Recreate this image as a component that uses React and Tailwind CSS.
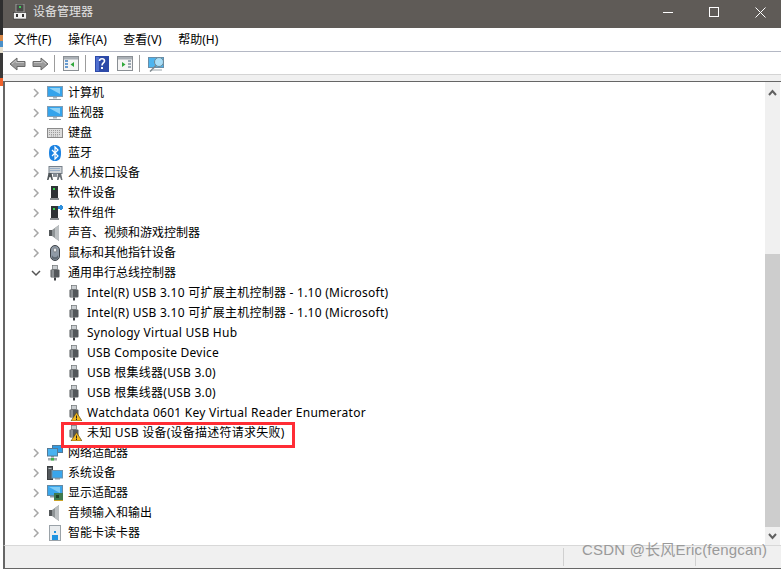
import React from 'react'

const fontStack = 'font-["Noto_Sans","Noto_Sans_CJK_SC",sans-serif]'

const Chevron = ({ open }) => (
  <svg width="10" height="10" viewBox="0 0 10 10" fill="none" stroke={open ? '#555' : '#a6a6a6'} strokeWidth="1.5">
    {open ? <path d="M1 3l4 4 4-4" /> : <path d="M3 1l4 4-4 4" />}
  </svg>
)

const Monitor = () => (
  <svg width="16" height="16" viewBox="0 0 16 16">
    <rect x="0.5" y="1.5" width="15" height="10" fill="#35a4ec" stroke="#7f9db5" />
    <path d="M2 3h11v6z" fill="#8fd3f8" />
    <path d="M6 12h4v1.5H6z" fill="#a8b4bc" />
    <path d="M2 14h12v1H2z" fill="#8d98a0" />
  </svg>
)

const Keyboard = () => (
  <svg width="16" height="16" viewBox="0 0 16 16">
    <rect x="0.5" y="3.5" width="15" height="9" fill="#dcdcdc" stroke="#8a8a8a" />
    <path d="M2 5.500h12M2 7.500h12M2 9.500h12M4 11h8" stroke="#9c9c9c" strokeDasharray="1 1" />
  </svg>
)

const Bluetooth = () => (
  <svg width="16" height="16" viewBox="0 0 16 16">
    <path d="M8 0c4 0 6 2 6 8s-2 8-6 8-6-2-6-8 2-8 6-8z" fill="#1a82e2" />
    <path d="M5 5l6 6-3 3V2l3 3-6 6" fill="none" stroke="#fff" strokeWidth="1.2" />
  </svg>
)

const Hid = () => (
  <svg width="16" height="16" viewBox="0 0 16 16">
    <rect x="2" y="1.5" width="13" height="7" fill="#cfd4d8" stroke="#77808a" />
    <path d="M3.5 3.5h10M3.5 5.5h10" stroke="#5f87b5" strokeDasharray="1 1" />
    <path d="M0 15l1.5-7h3L6 15H4.5L3.5 12H2.500L1.500 15z" fill="#4f5559" />
    <path d="M10 15l1-7h3l1.500 7H14l-1-3h-.5l-1 3z" fill="#6a7076" />
    <rect x="6" y="9" width="4" height="3" fill="#8a9097" />
  </svg>
)

const Tower = ({ plus }) => (
  <svg width="16" height="16" viewBox="0 0 16 16">
    <rect x="4" y="1" width="7" height="12" fill="#2f3336" />
    <rect x="6" y="3" width="2" height="2" fill="#35d04a" />
    <rect x="3" y="13" width="9" height="2" fill="#8b8f92" />
    {plus && <path d="M11 1h2V0h2v1h1v3h-1v1h-2V4h-2z" fill="#2e8fdc" />}
  </svg>
)

const Speaker = () => (
  <svg width="16" height="16" viewBox="0 0 16 16">
    <path d="M2 5h3L12 0v16L5 11H2z" fill="#8f9496" />
    <path d="M2 5h3v6H2z" fill="#54585a" />
    <path d="M8 3l4-3v16l-4-3z" fill="#bcc0c2" />
  </svg>
)

const Mouse = () => (
  <svg width="16" height="16" viewBox="0 0 16 16">
    <rect x="3.500" y="0.500" width="9" height="15" rx="4.500" fill="#8f9aa6" stroke="#3d4247" />
    <rect x="6.500" y="3" width="3" height="4" rx="1.500" fill="#e4e8ec" stroke="#555" strokeWidth="0.5" />
    <path d="M5 10c1 3 5 3 6 0v3c-1 2-5 2-6 0z" fill="#5f6972" />
  </svg>
)

const UsbPlug = ({ warn }) => (
  <svg width="16" height="16" viewBox="0 0 16 16">
    <rect x="5.500" y="0.500" width="5" height="4" fill="#c9cdd0" stroke="#6b6f72" strokeWidth="0.7" />
    <rect x="3.500" y="4.500" width="9" height="8" rx="1" fill="#54585b" />
    <path d="M4.500 5h2.500v7H4.500z" fill="#8b8f92" />
    <rect x="7" y="12.500" width="2" height="3" fill="#3c3f42" />
    {warn && (
      <>
        <path d="M10.500 7.500L16 16H5z" fill="#f2b91f" stroke="#5b4a16" strokeWidth="0.7" />
        <path d="M10.500 10.500v3M10.500 14v1" stroke="#222" strokeWidth="1" />
      </>
    )}
  </svg>
)

const Network = () => (
  <svg width="16" height="16" viewBox="0 0 16 16">
    <rect x="5.500" y="0.500" width="10" height="7" fill="#2f9be4" stroke="#547a96" />
    <rect x="0.500" y="3.500" width="10" height="7.500" fill="#49b2f0" stroke="#547a96" />
    <path d="M4 11h3v1.500H4z" fill="#7a8a94" />
    <path d="M1 13h9v2.500H1z" fill="#a7adb0" />
    <path d="M4 13h3v2.500H4z" fill="#3fb54a" />
  </svg>
)

const SystemDev = () => (
  <svg width="16" height="16" viewBox="0 0 16 16">
    <rect x="0.500" y="1.500" width="5" height="13" fill="#53585c" stroke="#3c3f42" />
    <rect x="1.500" y="3" width="3" height="1" fill="#b9bec2" />
    <rect x="5" y="5.500" width="10.500" height="7.500" fill="#3aa6ec" stroke="#6e93ad" />
    <path d="M8 13h5v1.500H8z" fill="#8f9aa2" />
  </svg>
)

const Display = () => (
  <svg width="16" height="16" viewBox="0 0 16 16">
    <rect x="0.500" y="0.500" width="15" height="10" fill="#3aa6ec" stroke="#668aa3" />
    <path d="M2 2h11v6z" fill="#7fcdf7" />
    <rect x="3" y="11" width="5" height="1.500" fill="#8f9aa2" />
    <rect x="7" y="8" width="9" height="7" fill="#3f7a4f" />
    <path d="M7 15.500h9" stroke="#c9a227" />
    <rect x="9" y="10" width="3" height="3" fill="#1f3f28" />
  </svg>
)

const CardReader = () => (
  <svg width="16" height="16" viewBox="0 0 16 16">
    <rect x="2.500" y="0.500" width="11" height="15" fill="#e9ecee" stroke="#9aa2a8" />
    <rect x="7" y="6" width="2" height="2" fill="#1f93e0" />
    <rect x="5" y="10" width="6" height="5" fill="#1f93e0" />
  </svg>
)

const rows = [
  { label: '计算机', icon: <Monitor /> },
  { label: '监视器', icon: <Monitor /> },
  { label: '键盘', icon: <Keyboard /> },
  { label: '蓝牙', icon: <Bluetooth /> },
  { label: '人机接口设备', icon: <Hid /> },
  { label: '软件设备', icon: <Tower /> },
  { label: '软件组件', icon: <Tower plus /> },
  { label: '声音、视频和游戏控制器', icon: <Speaker /> },
  { label: '鼠标和其他指针设备', icon: <Mouse /> },
  { label: '通用串行总线控制器', icon: <UsbPlug />, open: true },
  { label: 'Intel(R) USB 3.10 可扩展主机控制器 - 1.10 (Microsoft)', icon: <UsbPlug />, child: true },
  { label: 'Intel(R) USB 3.10 可扩展主机控制器 - 1.10 (Microsoft)', icon: <UsbPlug />, child: true },
  { label: 'Synology Virtual USB Hub', icon: <UsbPlug />, child: true },
  { label: 'USB Composite Device', icon: <UsbPlug />, child: true },
  { label: 'USB 根集线器(USB 3.0)', icon: <UsbPlug />, child: true },
  { label: 'USB 根集线器(USB 3.0)', icon: <UsbPlug />, child: true },
  { label: 'Watchdata 0601 Key Virtual Reader Enumerator', icon: <UsbPlug warn />, child: true },
  { label: '未知 USB 设备(设备描述符请求失败)', icon: <UsbPlug warn />, child: true },
  { label: '网络适配器', icon: <Network /> },
  { label: '系统设备', icon: <SystemDev /> },
  { label: '显示适配器', icon: <Display /> },
  { label: '音频输入和输出', icon: <Speaker /> },
  { label: '智能卡读卡器', icon: <CardReader /> },
]

const TreeRow = ({ row }) => (
  <div className={`flex h-5 items-center ${row.child ? 'pl-[61px]' : 'pl-[23px]'}`}>
    {!row.child && (
      <span className="flex w-[16px] shrink-0 justify-center">
        <Chevron open={row.open} />
      </span>
    )}
    <span className={`flex w-[16px] shrink-0 justify-center ${row.child ? '' : 'ml-[3px]'}`}>{row.icon}</span>
    <span className={`whitespace-nowrap text-[12px] leading-5 text-black ${row.child ? 'ml-[5px] tracking-[0.25px]' : 'ml-[5px]'}`}>
      {row.label}
    </span>
  </div>
)

const Arrow = ({ flip }) => (
  <svg width="17" height="16" viewBox="0 0 17 16" className={flip ? '-scale-x-100' : ''}>
    <path d="M1 8l7-6v3.500h8v5H8V14z" fill="#9a9a9a" stroke="#6a6a6a" />
    <path d="M3 8l4-3.500v2h8" fill="none" stroke="#c4c4c4" />
  </svg>
)

const PanelIcon = ({ right }) => (
  <svg width="16" height="15" viewBox="0 0 16 15">
    <rect x="0.500" y="0.500" width="15" height="14" fill="#f4f4f4" stroke="#8a8f94" />
    <rect x="1" y="1" width="14" height="2.500" fill="#aab0b6" />
    {right ? (
      <>
        <path d="M5 6l3.500 2.500L5 11z" fill="#2fa83a" />
        <path d="M11 5h3M11 8h3M11 11h3" stroke="#7d8d9c" strokeWidth="1.500" />
      </>
    ) : (
      <>
        <path d="M2 5h3M2 8h3M2 11h3" stroke="#3a7fc4" strokeWidth="1.500" />
        <path d="M11 6L7.500 8.500 11 11z" fill="#2fa83a" />
      </>
    )}
  </svg>
)

const HelpIcon = () => (
  <svg width="14" height="16" viewBox="0 0 14 16">
    <rect width="14" height="16" fill="#2d4aa8" />
    <rect x="1" y="1" width="3" height="14" fill="#4f6fd0" />
    <path d="M4.500 5c0-3 5-3 5 0 0 2-2.500 2-2.500 4.500" fill="none" stroke="#fff" strokeWidth="1.600" />
    <rect x="6" y="11" width="2" height="2" fill="#fff" />
  </svg>
)

const ScanIcon = () => (
  <svg width="17" height="16" viewBox="0 0 17 16">
    <rect x="0.500" y="1.500" width="15" height="10" fill="#4db4ee" stroke="#6a8ea8" />
    <circle cx="11" cy="6" r="4.500" fill="#a8def8" stroke="#6d8795" />
    <path d="M8 9.500L2 15.500" stroke="#7b868c" strokeWidth="1.500" />
    <path d="M4 14h10" stroke="#9aa4aa" />
  </svg>
)

const Sep = () => <span className="h-[17px] w-px bg-[#9c9c9c]" />

export default function App() {
  return (
    <div className={`flex h-[570px] w-[781px] overflow-hidden bg-white ${fontStack}`}>
      {/* desktop sliver behind the window */}
      <div className="flex w-[3px] shrink-0 flex-col">
        <span className="h-[35px] bg-[#2e2e2e]" />
        <span className="h-[6px] bg-[#d98a4a]" />
        <span className="h-[6px] bg-[#4a90c8]" />
        <span className="h-[6px] bg-[#e6e0d0]" />
        <span className="h-[25px] bg-[#3a3a3a]" />
        <span className="h-[8px] bg-[#f0622c]" />
      </div>
      <div className="relative flex min-w-0 flex-1 flex-col">
        {/* title bar */}
        <div className="flex h-[28px] shrink-0 items-center bg-[#5f5b57] pb-1 pl-[10px]">
          <svg width="14" height="16" viewBox="0 0 14 16">
            <rect x="3" y="0" width="8" height="8" fill="#4a4a48" stroke="#ddd" strokeWidth="0.5" />
            <rect x="6" y="2" width="2" height="2" fill="#3fd05a" />
            <rect x="0.500" y="8.500" width="13" height="6.500" fill="#f0f0f0" stroke="#333" strokeWidth="0.6" />
            <rect x="3" y="10" width="2" height="3" fill="#333" />
            <rect x="9" y="10" width="2" height="3" fill="#333" />
          </svg>
          <span className="ml-[6px] text-[12px] text-[#e2e2e2]">设备管理器</span>
          <div className="ml-auto -mr-[2px] flex items-center">
            <span className="flex w-[46px] justify-center">
              <span className="h-px w-[10px] bg-white" />
            </span>
            <span className="flex w-[46px] justify-center">
              <span className="h-[10px] w-[10px] border border-white" />
            </span>
            <span className="flex w-[46px] justify-center">
              <svg width="11" height="11" viewBox="0 0 11 11" stroke="#fff" fill="none">
                <path d="M0.500 0.500l10 10M10.500 0.500l-10 10" />
              </svg>
            </span>
          </div>
        </div>

        {/* menu bar */}
        <div className="flex h-[24px] shrink-0 items-center gap-[16.5px] border-b border-[#b4b8c4] pl-[11px] text-[12px] text-black">
          <span>文件(F)</span>
          <span>操作(A)</span>
          <span>查看(V)</span>
          <span>帮助(H)</span>
        </div>

        {/* toolbar */}
        <div className="flex h-[23px] shrink-0 items-center border-b border-[#d4d4d4] pl-[6px] pt-px">
          <Arrow />
          <span className="w-[6px]" />
          <Arrow flip />
          <span className="w-[5px]" />
          <Sep />
          <span className="w-[8px]" />
          <PanelIcon />
          <span className="w-[6px]" />
          <Sep />
          <span className="w-[9px]" />
          <HelpIcon />
          <span className="w-[8px]" />
          <PanelIcon right />
          <span className="w-[6px]" />
          <Sep />
          <span className="w-[8px]" />
          <ScanIcon />
        </div>
        <div className="h-[7px] shrink-0 border-b border-[#666] bg-[#f0f0f0]" />

        {/* device tree + scrollbar */}
        <div className="flex min-h-0 flex-1 border-l-2 border-[#666]">
          <div className="min-w-0 flex-1 overflow-hidden pt-px">
            {rows.map((row, i) => (
              <TreeRow key={i} row={row} />
            ))}
          </div>
          <div className="mr-px flex w-[15px] shrink-0 flex-col bg-[#f0f0f0]">
            <div className="flex h-[20px] items-center justify-center">
              <svg width="9" height="7" viewBox="0 0 9 7" fill="none" stroke="#606060" strokeWidth="2">
                <path d="M1 6l3.500-4L8 6" />
              </svg>
            </div>
            <div className="mt-[152px] h-[273px] bg-[#cdcdcd]" />
            <div className="flex h-[18px] items-center justify-center">
              <svg width="9" height="7" viewBox="0 0 9 7" fill="none" stroke="#606060" strokeWidth="2">
                <path d="M1 1l3.500 4L8 1" />
              </svg>
            </div>
          </div>
        </div>

        {/* status bar */}
        <div className="flex h-[24px] shrink-0 border-y border-[#d8d8d8] border-b-[#666] border-l-2 border-l-[#666] bg-[#f0f0f0]">
          <span className="ml-[558px] mt-[2px] h-[18px] w-px bg-[#d0d0d0]" />
          <span className="ml-[131px] mt-[2px] h-[18px] w-px bg-[#d0d0d0]" />
        </div>
        <div className="h-px shrink-0 bg-white" />

        {/* highlight box */}
        <div className="absolute left-[58px] top-[422px] h-[26px] w-[234px] border-[3px] border-[#ff2d35]" />
        {/* watermark */}
        <span className='absolute left-[579px] top-[540px] font-["Liberation_Sans","Noto_Sans_CJK_SC",sans-serif] text-[15px] leading-5 tracking-[0.2px] text-[#9a9a9a]'>
          CSDN @长风Eric(fengcan)
        </span>
      </div>
    </div>
  )
}
